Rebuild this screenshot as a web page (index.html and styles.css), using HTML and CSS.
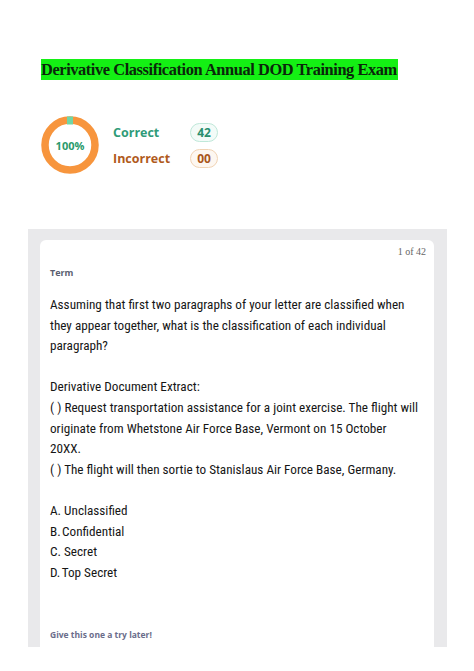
FILE: index.html
```html
<!DOCTYPE html>
<html lang="en">
<head>
<meta charset="utf-8">
<title>Derivative Classification Annual DOD Training Exam</title>
<link rel="stylesheet" href="styles.css">
</head>
<body>
<header class="head">
  <h1 class="title"><span class="title-mark">Derivative Classification Annual DOD Training Exam</span></h1>
  <div class="score">
    <div class="donut">
      <svg width="58" height="58" viewBox="0 0 58 58" aria-hidden="true">
        <circle cx="29" cy="29" r="25" fill="none" stroke="#f7953d" stroke-width="7.5"/>
        <rect x="26" y="0.5" width="6" height="8" fill="#6fd6a6"/>
      </svg>
      <span class="donut-label">100%</span>
    </div>
    <div class="tallies">
      <div class="tally"><span class="tally-name correct">Correct</span><span class="pill pill-correct">42</span></div>
      <div class="tally"><span class="tally-name incorrect">Incorrect</span><span class="pill pill-incorrect">00</span></div>
    </div>
  </div>
</header>
<main class="panel">
  <section class="card">
    <div class="counter">1 of 42</div>
    <div class="term">Term</div>
    <div class="question">
      <p>Assuming that first two paragraphs of your letter are classified when they appear together, what is the classification of each individual paragraph?</p>
      <p>Derivative Document Extract:<br>( ) Request transportation assistance for a joint exercise. The flight will originate from Whetstone Air Force Base, Vermont on 15 October 20XX.<br>( ) The flight will then sortie to Stanislaus Air Force Base, Germany.</p>
      <p>A. Unclassified<br>B.&#8202;Confidential<br>C. Secret<br>D.&#8202;Top Secret</p>
    </div>
    <div class="later">Give this one a try later!</div>
  </section>
</main>
</body>
</html>
```
FILE: styles.css
```css
* { box-sizing: border-box; }
html, body { margin: 0; padding: 0; background: #fff; }
body { width: 474px; height: 671px; overflow: hidden; font-family: "Open Sans", "Liberation Sans", sans-serif; }

.head { padding: 60px 0 0 41px; height: 229px; }
.title { margin: 0; font-family: "Liberation Serif", serif; font-weight: bold; font-size: 16.4px; line-height: 20px; letter-spacing: -0.42px; color: #0b260b; }
.title-mark { background: #14f014; padding: 1px 1px 1px 0; }

.score { display: flex; align-items: center; margin-top: 36px; }
.donut { position: relative; width: 58px; height: 58px; }
.donut svg { display: block; }
.donut-label { position: absolute; inset: 0; display: flex; align-items: center; justify-content: center; font-size: 11px; font-weight: bold; color: #2a9a6c; }

.tallies { display: flex; flex-direction: column; gap: 7px; margin-left: 14px; }
.tally { display: flex; align-items: center; }
.tally-name { width: 77px; font-size: 12.5px; font-weight: bold; }
.correct { color: #2f9b78; }
.incorrect { color: #b05a1c; }
.pill { display: inline-flex; align-items: center; justify-content: center; width: 28px; height: 19px; border-radius: 10px; font-size: 12px; font-weight: bold; }
.pill-correct { color: #2a8f6e; border: 1px solid #bfe8d9; background: #f3fbf8; }
.pill-incorrect { color: #a9561a; border: 1px solid #f1d3b4; background: #fdf7f1; }

.panel { margin-left: 28px; width: 419px; height: 418px; background: #e9e9eb; padding: 11px 13px 0 12px; }
.card { background: #fff; height: 100%; border-radius: 6px 6px 0 0; padding: 5px 8px 0 10px; display: flex; flex-direction: column; }
.counter { text-align: right; font-family: "Liberation Serif", serif; font-size: 10px; color: #666; line-height: 14px; }
.term { margin-top: 8px; font-size: 9px; font-weight: bold; color: #5a5e70; line-height: 12px; }
.question { margin-top: 16px; padding-right: 6.5px; font-family: "Liberation Sans Narrow", "Roboto Condensed", "Liberation Sans", sans-serif; font-size: 13.2px; line-height: 20.6px; color: #161616; }
.question p { margin: 0 0 20.6px; }
.later { margin-top: auto; margin-bottom: 7px; font-size: 8.5px; font-weight: bold; color: #6a6d8a; }
```
